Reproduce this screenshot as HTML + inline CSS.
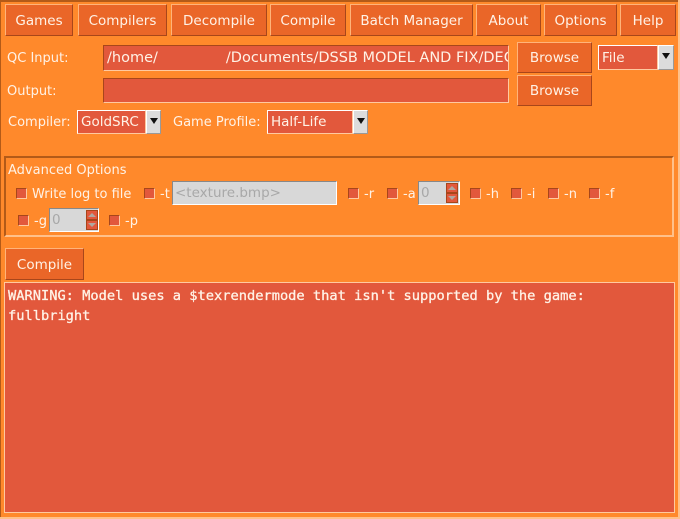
<!DOCTYPE html>
<html><head><meta charset="utf-8"><style>
body{margin:0;width:680px;height:519px;background:#ff892b;position:relative;overflow:hidden;font-family:"DejaVu Sans","Liberation Sans",sans-serif;font-size:13px;color:#fff2e6}
.a{position:absolute;box-sizing:border-box}
.btn{background:#ea6628;border:1px solid;border-color:#ffb47a #a8461a #a8461a #ffb47a;display:flex;align-items:center;justify-content:center;color:#fff2e6;font-size:13.5px;padding-top:1px}
.fld{background:#e2583c;border:1px solid;border-color:#a8461a #ffc9a0 #ffc9a0 #a8461a;padding-left:3px;display:flex;align-items:center;white-space:nowrap;overflow:hidden;color:#fff2e6;font-size:13.5px}
.arr{background:#dcdcdc;border:1px solid;border-color:#fff #999 #999 #fff}
.arr:after{content:"";position:absolute;left:3px;top:7px;border-left:4px solid transparent;border-right:4px solid transparent;border-top:6px solid #111}
.lbl{position:absolute;white-space:nowrap;line-height:16px;margin-top:1px}
.cb{position:absolute;width:11px;height:11px;background:#e2583c;border:1px solid;border-color:#a8461a #ffc9a0 #ffc9a0 #a8461a;box-sizing:border-box}
.dis{background:#d8d8d8;border:1px solid;border-color:#888 #fff #fff #888;color:#a8a8a8;padding-left:2px;display:flex;align-items:center;font-size:13.5px}
.sp{position:absolute;width:12px;height:10px;background:#e2583c;border:1px solid #a8461a;box-sizing:border-box}
.up:after,.dn:after{content:"";position:absolute;left:1px;border-left:4px solid transparent;border-right:4px solid transparent}
.up:after{top:2px;border-bottom:4px solid #b0a8a0}
.dn:after{top:2px;border-top:4px solid #b0a8a0}
</style></head><body>
<div class="a" style="left:0;top:0;width:680px;height:2px;background:#b35a18"></div>
<div class="a" style="left:0;top:0;width:1px;height:519px;background:#b35a18"></div>
<div class="a" style="right:0;top:0;width:2px;height:519px;background:#ffc08a"></div>
<div class="a" style="left:0;bottom:0;width:680px;height:2px;background:#ffc08a"></div>

<div class="a btn" style="left:5px;top:4px;width:68px;height:32px">Games</div>
<div class="a btn" style="left:78px;top:4px;width:89px;height:32px">Compilers</div>
<div class="a btn" style="left:171px;top:4px;width:96px;height:32px">Decompile</div>
<div class="a btn" style="left:270px;top:4px;width:76px;height:32px">Compile</div>
<div class="a btn" style="left:350px;top:4px;width:123px;height:32px">Batch Manager</div>
<div class="a btn" style="left:476px;top:4px;width:65px;height:32px">About</div>
<div class="a btn" style="left:544px;top:4px;width:73px;height:32px">Options</div>
<div class="a btn" style="left:620px;top:4px;width:56px;height:32px">Help</div>

<div class="lbl" style="left:7px;top:50px">QC Input:</div>
<div class="a fld" style="left:103px;top:45px;width:406px;height:26px;font-size:14.5px;display:block;line-height:24px">/home/<span style="display:inline-block;width:68px"></span>/Documents/DSSB MODEL AND FIX/DECOMPILED</div>
<div class="a btn" style="left:517px;top:42px;width:75px;height:31px">Browse</div>
<div class="a fld" style="left:598px;top:45px;width:60px;height:25px;border-color:#fff #ffc9a0 #ffc9a0 #fff">File</div>
<div class="a arr" style="left:658px;top:45px;width:16px;height:25px"></div>

<div class="lbl" style="left:7px;top:83px">Output:</div>
<div class="a fld" style="left:103px;top:78px;width:406px;height:25px"></div>
<div class="a btn" style="left:517px;top:75px;width:75px;height:31px">Browse</div>

<div class="lbl" style="left:8px;top:114px">Compiler:</div>
<div class="a fld" style="left:77px;top:110px;width:69px;height:24px;border-color:#fff #ffc9a0 #ffc9a0 #fff">GoldSRC</div>
<div class="a arr" style="left:146px;top:110px;width:15px;height:24px"></div>
<div class="lbl" style="left:173px;top:114px">Game Profile:</div>
<div class="a fld" style="left:267px;top:110px;width:86px;height:24px;border-color:#fff #ffc9a0 #ffc9a0 #fff">Half-Life</div>
<div class="a arr" style="left:353px;top:110px;width:15px;height:24px"></div>

<div class="a" style="left:4px;top:156px;width:670px;height:81px;border:2px solid;border-color:#b35a18 #ffc08a #ffc08a #b35a18"></div>
<div class="lbl" style="left:8px;top:162px">Advanced Options</div>
<div class="cb" style="left:16px;top:188px"></div><div class="lbl" style="left:32px;top:186px">Write log to file</div>
<div class="cb" style="left:144px;top:188px"></div><div class="lbl" style="left:160px;top:186px">-t</div>
<div class="a dis" style="left:172px;top:181px;width:165px;height:24px">&lt;texture.bmp&gt;</div>
<div class="cb" style="left:348px;top:188px"></div><div class="lbl" style="left:364px;top:186px">-r</div>
<div class="cb" style="left:387px;top:188px"></div><div class="lbl" style="left:403px;top:186px">-a</div>
<div class="a dis" style="left:418px;top:181px;width:42px;height:24px">0</div>
<div class="sp up" style="left:446px;top:183px"></div><div class="sp dn" style="left:446px;top:193px"></div>
<div class="cb" style="left:470px;top:188px"></div><div class="lbl" style="left:486px;top:186px">-h</div>
<div class="cb" style="left:511px;top:188px"></div><div class="lbl" style="left:527px;top:186px">-i</div>
<div class="cb" style="left:548px;top:188px"></div><div class="lbl" style="left:564px;top:186px">-n</div>
<div class="cb" style="left:589px;top:188px"></div><div class="lbl" style="left:605px;top:186px">-f</div>
<div class="cb" style="left:18px;top:215px"></div><div class="lbl" style="left:34px;top:213px">-g</div>
<div class="a dis" style="left:49px;top:208px;width:50px;height:24px">0</div>
<div class="sp up" style="left:86px;top:210px"></div><div class="sp dn" style="left:86px;top:220px"></div>
<div class="cb" style="left:109px;top:215px"></div><div class="lbl" style="left:125px;top:213px">-p</div>

<div class="a btn" style="left:5px;top:248px;width:79px;height:32px">Compile</div>
<div class="a" style="left:4px;top:282px;width:671px;height:231px;background:#e2583c;border:1px solid #ffc9a0;font-family:'DejaVu Sans Mono','Liberation Mono',monospace;font-size:13.7px;line-height:20px;padding:3px 0 0 3px;color:#fff2e6;-webkit-text-stroke:0.3px #fff2e6">WARNING: Model uses a $texrendermode that isn't supported by the game:<br>fullbright</div>
</body></html>
